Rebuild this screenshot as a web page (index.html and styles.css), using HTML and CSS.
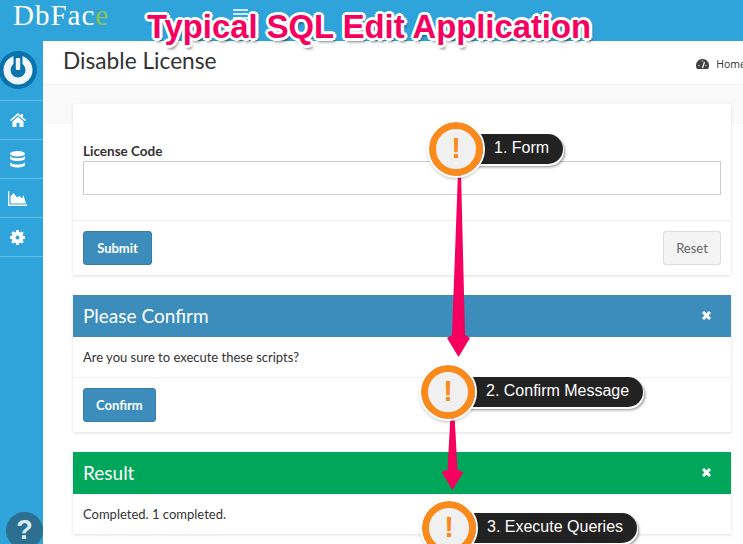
FILE: index.html
```html
<!DOCTYPE html>
<html lang="en">
<head>
  <meta charset="UTF-8" />
  <title>Typical SQL Edit Application</title>
  <link rel="stylesheet" href="styles.css">
</head>
<body>
  <div class="topbar">
    <div class="logo">DbFac<span class="logo-e">e</span></div>
    <div class="menu-toggle"><i></i><i></i><i></i></div>
  </div>

  <div class="layout">
    <div class="sidebar">
      <div class="power-row">
        <svg width="38" height="38" viewBox="0 0 38 38">
          <circle cx="18" cy="19" r="19" fill="#0a72ad"/>
          <circle cx="18" cy="19" r="11" fill="none" stroke="#eef6fb" stroke-width="7"/>
          <rect x="13.500" y="2" width="9" height="13" fill="#0a72ad"/>
          <rect x="15.800" y="7" width="4.400" height="12" rx="1" fill="#eef6fb"/>
        </svg>
      </div>
      <a class="side-item">
        <svg width="16" height="14" viewBox="0 0 16 14"><path fill="#fff" d="M8 0 0 7l1 1.2L8 2.300l7 5.900L16 7l-3-2.600V1h-2v1.700zM2.500 8.600V14H6.500V10h3v4h4V8.600L8 3.800z"/></svg>
      </a>
      <a class="side-item">
        <svg width="15" height="17" viewBox="0 0 15 17"><g fill="#fff"><ellipse cx="7.500" cy="2.800" rx="7.500" ry="2.800"/><path d="M0 4.800C1 6.600 4 7.200 7.500 7.200S14 6.600 15 4.800V7.500C15 9 11.600 10 7.500 10S0 9 0 7.500z"/><path d="M0 9.700C1 11.400 4 12 7.500 12S14 11.400 15 9.700V12.300C15 14 11.600 15 7.500 15S0 14 0 12.300z" transform="translate(0 1.500)"/></g></svg>
      </a>
      <a class="side-item">
        <svg width="19" height="15" viewBox="0 0 19 15"><path fill="#fff" d="M0 0h1.300v13.500H19V15H0zM2.500 12.500V5.500L5.500 2l3.500 4.500L11.500 5l2.500 2.500L15.500 4 18 12.500z"/></svg>
      </a>
      <a class="side-item">
        <svg width="15" height="15" viewBox="0 0 15 15"><circle cx="7.500" cy="7.500" r="4.200" fill="none" stroke="#fff" stroke-width="3.400"/><path stroke="#fff" stroke-width="2.800" d="M7.500 0v15M0 7.500h15M2.200 2.200l10.600 10.600M12.800 2.200 2.200 12.800"/><circle cx="7.500" cy="7.500" r="2" fill="#2ea4db"/></svg>
      </a>
      <div class="help">?</div>
    </div>

    <div class="main">
      <div class="page-head">
        <h1>Disable License</h1>
        <div class="crumb">
          <svg width="13" height="11" viewBox="0 0 13 11"><path fill="#444" d="M6.500 0A6.500 6.500 0 0 0 1 10h11A6.500 6.500 0 0 0 6.500 0z"/><path stroke="#fff" stroke-width="1.200" d="M6.500 9 8.500 3M2.500 6.500h1M9.500 6.500h1M6.500 1.500v1"/></svg>
          <span>Home</span>
        </div>
      </div>
      <div class="head-band"></div>

      <div class="content">
        <div class="card">
          <div class="card-body form-body">
            <label>License Code</label>
            <div class="text-input"></div>
          </div>
          <div class="card-foot split">
            <button class="btn btn-blue">Submit</button>
            <button class="btn btn-plain">Reset</button>
          </div>
        </div>

        <div class="card">
          <div class="box-head blue">Please Confirm
            <svg class="close" width="9" height="9" viewBox="0 0 9 9"><path stroke="#fff" stroke-width="3" d="M1 1l7 7M8 1 1 8"/></svg>
          </div>
          <div class="card-body msg">Are you sure to execute these scripts?</div>
          <div class="card-foot">
            <button class="btn btn-blue">Confirm</button>
          </div>
        </div>

        <div class="card">
          <div class="box-head green">Result
            <svg class="close" width="9" height="9" viewBox="0 0 9 9"><path stroke="#fff" stroke-width="3" d="M1 1l7 7M8 1 1 8"/></svg>
          </div>
          <div class="card-body msg">Completed. 1 completed.</div>
        </div>
      </div>
    </div>
  </div>

  <!-- annotations drawn over the screenshot -->
  <div class="title-note">Typical SQL Edit Application</div>

  <svg class="arrows" width="743" height="544" viewBox="0 0 743 544">
    <path fill="#f5005f" d="M458 172h3l4 163 5 3-11.500 19L447 338l5-3z"/>
    <path fill="#f5005f" d="M450.500 415h4l3 55 6 2-11 18-11-18 6-2z"/>
  </svg>

  <div class="callout c1">
    <div class="bang">!</div>
    <div class="pill">1. Form</div>
  </div>
  <div class="callout c2">
    <div class="bang">!</div>
    <div class="pill">2. Confirm Message</div>
  </div>
  <div class="callout c3">
    <div class="bang">!</div>
    <div class="pill">3. Execute Queries</div>
  </div>
</body>
</html>
```

FILE: styles.css
```css
* {
  box-sizing: border-box;
}

html,
body {
  height: 544px;
}

body {
  margin: 0;
  width: 743px;
  overflow: hidden;
  position: relative;
  background: #fff;
  color: #333;
  font-family: Lato, "Open Sans", Arial, sans-serif;
  font-size: 13px;
}

.topbar {
  height: 41px;
  background: #2ea4db;
  display: flex;
  align-items: center;
  padding-left: 13px;
}

.logo {
  font-family: "Liberation Serif", serif;
  font-size: 29px;
  color: #fff;
  letter-spacing: 1px;
  width: 220px;
  margin-top: -11px;
}

.logo-e {
  color: #8cc152;
}

.menu-toggle {
  display: flex;
  flex-direction: column;
  gap: 2px;
  margin-top: -13px;
}

.menu-toggle i {
  display: block;
  width: 15px;
  height: 2px;
  background: #cfe8f5;
}

.layout {
  display: flex;
  height: 503px;
}

.sidebar {
  width: 43px;
  background: #2ea4db;
  display: flex;
  flex-direction: column;
  position: relative;
}

.power-row {
  height: 60px;
  padding-top: 10px;
  border-bottom: 1px solid #62bce5;
}

.side-item {
  height: 39px;
  border-bottom: 1px solid #62bce5;
  display: flex;
  align-items: center;
  justify-content: center;
  padding-right: 8px;
}

.help {
  position: absolute;
  left: 6px;
  top: 471px;
  width: 37px;
  height: 37px;
  border-radius: 50%;
  background: #2c6f90;
  color: #d9eef8;
  font: bold 27px/36px "Liberation Sans", sans-serif;
  text-align: center;
}

.main {
  flex: 1;
  min-width: 0;
}

.page-head {
  height: 44px;
  background: #fff;
  border-bottom: 1px solid #eee;
  box-shadow: 0 1px 2px rgba(0, 0, 0, 0.05);
  display: flex;
  align-items: center;
  justify-content: space-between;
  padding-left: 20px;
}

.page-head h1 {
  margin: 0 0 4px;
  font-size: 22.700px;
  font-weight: 400;
  color: #333;
}

.crumb {
  display: flex;
  align-items: center;
  gap: 7px;
  font-family: "Open Sans", Arial, sans-serif;
  font-size: 10.500px;
  white-space: nowrap;
  margin-right: -3px;
  margin-top: 3px;
}

.head-band {
  height: 39px;
  background: #f9f9f9;
}

.content {
  margin-top: -20px;
  padding: 0 12px 0 30px;
  display: flex;
  flex-direction: column;
  gap: 20px;
}

.card {
  background: #fff;
  box-shadow: 0 1px 3px rgba(0, 0, 0, 0.13);
  position: relative;
}

.form-body {
  height: 116px;
  padding: 39px 10px 0;
}

.form-body label {
  display: block;
  font-size: 13.500px;
  font-weight: 700;
  color: #333;
  line-height: 17px;
  margin-bottom: 1px;
}

.text-input {
  height: 34px;
  border: 1px solid #ccc;
}

.card-foot {
  border-top: 1px solid #f0f0f0;
  padding: 10px;
  height: 55px;
}

.split {
  display: flex;
  justify-content: space-between;
}

.btn {
  height: 34px;
  min-width: 69px;
  border-radius: 3px;
  font: 700 13px Lato, "Open Sans", Arial, sans-serif;
  padding: 0 12px;
}

.btn-blue {
  background: #3c8dbc;
  border: 1px solid #367fa9;
  color: #fff;
}

.btn-plain {
  min-width: 0;
  width: 58px;
  padding: 0;
  background: #f4f4f4;
  border: 1px solid #ddd;
  color: #666;
  font-weight: 400;
}

.box-head {
  height: 42px;
  padding: 0 20px 2px 10px;
  display: flex;
  align-items: center;
  justify-content: space-between;
  color: #fff;
  font-size: 19px;
}

.box-head.blue {
  background: #3c8dbc;
}

.box-head.green {
  background: #00a65a;
}

.msg {
  height: 40px;
  padding: 12px 10px 0;
  line-height: 17px;
}

.title-note {
  position: absolute;
  left: 147px;
  top: 9px;
  font: bold 32.800px/36px "Liberation Sans", sans-serif;
  color: #f5005f;
  white-space: nowrap;
  text-shadow: 3px 0 0 #fff, -3px 0 0 #fff, 0 3px 0 #fff, 0 -3px 0 #fff, 2px 2px 0 #fff, -2px -2px 0 #fff, 2px -2px 0 #fff, -2px 2px 0 #fff, 2px 4px 3px rgba(0, 0, 0, 0.5);
}

.arrows {
  position: absolute;
  left: 0;
  top: 0;
  pointer-events: none;
}

.callout {
  position: absolute;
  display: flex;
  align-items: center;
}

.c1 {
  left: 429px;
  top: 122px;
}

.c2 {
  left: 421px;
  top: 365px;
}

.c3 {
  left: 422px;
  top: 501px;
}

.bang {
  width: 54px;
  height: 54px;
  border-radius: 50%;
  background: #f0f0f0;
  border: 7px solid #fb8a1c;
  outline: 2px solid #fff;
  box-shadow: 0 2px 4px rgba(0, 0, 0, 0.4);
  color: #fb8a1c;
  font: bold 29px/39px "Liberation Sans", sans-serif;
  text-align: center;
  position: relative;
  z-index: 1;
  flex: none;
}

.pill {
  height: 30px;
  margin-left: -8px;
  padding: 0 14px 0 19px;
  border-radius: 0 15px 15px 0;
  background: #222;
  box-shadow: 1px 2px 0 #fff, 2px 3px 3px rgba(0, 0, 0, 0.45);
  color: #fff;
  font: 16px/28px "Liberation Sans", sans-serif;
  white-space: nowrap;
}
```
